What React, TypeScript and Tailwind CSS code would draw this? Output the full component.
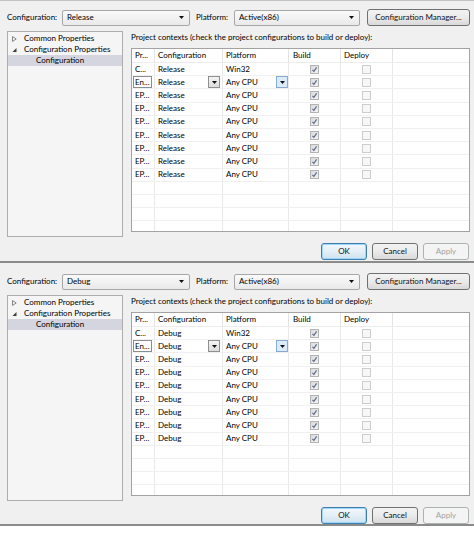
import React from 'react';

const rows = [
  { p: 'C...', plat: 'Win32' },
  { p: 'En...', plat: 'Any CPU', edit: true },
  { p: 'EP...', plat: 'Any CPU' },
  { p: 'EP...', plat: 'Any CPU' },
  { p: 'EP...', plat: 'Any CPU' },
  { p: 'EP...', plat: 'Any CPU' },
  { p: 'EP...', plat: 'Any CPU' },
  { p: 'EP...', plat: 'Any CPU' },
  { p: 'EP...', plat: 'Any CPU' },
];

function DownArrow() {
  return (
    <svg width="5" height="3" viewBox="0 0 5 3">
      <path d="M0 0h5L2.5 3z" fill="#111" />
    </svg>
  );
}

function Combo({ value, w }: { value: string; w: string }) {
  return (
    <div
      className={`${w} h-[16px] flex items-center pl-[4px] pr-[5px] border border-[#a7a7a7] rounded-[2px] bg-gradient-to-b from-[#fafafa] to-[#e9e9e9]`}
    >
      <span className="flex-1 truncate">{value}</span>
      <DownArrow />
    </div>
  );
}

function Btn({ children, className, variant }: { children: React.ReactNode; className: string; variant?: 'default' | 'disabled' }) {
  let look = 'border-[#707070] bg-gradient-to-b from-[#f3f3f3] via-[#ebebeb] to-[#d9d9d9] text-[#111]';
  if (variant === 'default') look = 'border-[#3c7fb1] bg-gradient-to-b from-[#f2f8fc] via-[#e4eff7] to-[#cde2f0] shadow-[inset_0_0_0_1px_#9fd6f5] text-[#111]';
  if (variant === 'disabled') look = 'border-[#adb2b5] bg-[#f4f4f4] text-[#a3a3a3]';
  return (
    <div className={`${className} ${look} h-[17px] border rounded-[3px] flex items-center justify-center`}>
      {children}
    </div>
  );
}

function Tree() {
  return (
    <div className="w-[116px] h-full border border-[#adadad] bg-[#f5f5f5] pt-[1px]">
      <div className="h-[11px] flex items-center pl-[4px]">
        <svg width="5" height="6" viewBox="0 0 5 6" className="mr-[7px]">
          <path d="M0.5 0.5 L4.2 3 L0.5 5.5 Z" fill="none" stroke="#7a7a7a" strokeWidth="0.9" />
        </svg>
        <span>Common Properties</span>
      </div>
      <div className="h-[11px] flex items-center pl-[4px]">
        <svg width="5" height="6" viewBox="0 0 5 6" className="mr-[7px]">
          <path d="M4.5 1 L4.5 5 L0.5 5 Z" fill="#3c3c3c" />
        </svg>
        <span>Configuration Properties</span>
      </div>
      <div className="h-[11px] flex items-center pl-[28px] bg-[#d5d5df]">
        <span>Configuration</span>
      </div>
    </div>
  );
}

function Check({ on }: { on: boolean }) {
  if (!on) return <div className="w-[9px] h-[9px] border border-[#cdcdcd] bg-[#f7f7f7]" />;
  return (
    <div className="w-[9px] h-[9px] border border-[#b3b3b3] bg-gradient-to-br from-[#dadada] to-[#f3f3f3] flex items-center justify-center">
      <svg width="7" height="7" viewBox="0 0 7 7">
        <path d="M1.4 3.8 L2.9 5.3 L5.6 1.4" stroke="#5a6c8e" strokeWidth="1.2" fill="none" />
      </svg>
    </div>
  );
}

function CellBtn({ hot }: { hot?: boolean }) {
  return (
    <div
      className={`w-[12px] h-[12px] border flex items-center justify-center ${
        hot ? 'border-[#86abd3] bg-[#d9eaf9]' : 'border-[#8f8f8f] bg-gradient-to-b from-[#f4f4f4] to-[#dcdcdc]'
      }`}
    >
      <DownArrow />
    </div>
  );
}

const col = ['w-[23px]', 'w-[68px]', 'w-[66px]', 'w-[52px]', 'w-[52px]'];

function Table({ config }: { config: string }) {
  return (
    <div className="h-[184px] border border-[#a3a3a3] bg-white overflow-hidden">
      <div className="flex h-[14px] border-b border-[#ececec]">
        <div className={`${col[0]} pl-[3px] border-r border-[#e3e3e3] flex items-center`}>Pr...</div>
        <div className={`${col[1]} pl-[3px] border-r border-[#e3e3e3] flex items-center`}>Configuration</div>
        <div className={`${col[2]} pl-[3px] border-r border-[#e3e3e3] flex items-center`}>Platform</div>
        <div className={`${col[3]} pl-[4px] border-r border-[#e3e3e3] flex items-center`}>Build</div>
        <div className={`${col[4]} pl-[3px] border-r border-[#e3e3e3] flex items-center`}>Deploy</div>
        <div className="flex-1" />
      </div>
      {rows.map((r, i) => (
        <div key={i} className="flex h-[13.2px] border-b border-[#f0f0f0]">
          <div className={`${col[0]} border-r border-[#e9e9e9] flex items-center pl-[1px]`}>
            {r.edit ? (
              <span className="border border-[#8c8c8c] px-[1px] leading-[10px]">{r.p}</span>
            ) : (
              <span className="pl-[2px]">{r.p}</span>
            )}
          </div>
          <div className={`${col[1]} border-r border-[#e9e9e9] flex items-center pl-[3px] pr-[2px]`}>
            <span className="flex-1">{config}</span>
            {r.edit && <CellBtn />}
          </div>
          <div className={`${col[2]} border-r border-[#e9e9e9] flex items-center pl-[3px]`}>
            <span className="flex-1">{r.plat}</span>
            {r.edit && <CellBtn hot />}
          </div>
          <div className={`${col[3]} border-r border-[#e9e9e9] flex items-center justify-center`}>
            <Check on />
          </div>
          <div className={`${col[4]} border-r border-[#e9e9e9] flex items-center justify-center`}>
            <Check on={false} />
          </div>
          <div className="flex-1" />
        </div>
      ))}
      {[0, 1, 2, 3].map((i) => (
        <div key={i} className="flex h-[13.2px] border-b border-[#f0f0f0]">
          {col.map((c, j) => (
            <div key={j} className={`${c} border-r border-[#e9e9e9]`} />
          ))}
        </div>
      ))}
    </div>
  );
}

function Dialog({ config, top, className }: { config: string; top: string; className: string }) {
  return (
    <div className={`${className} ${top} bg-[#f0f0f0] border-b-2 border-b-[#8b8b8b] pl-[7px] pr-[4px] flex flex-col`}>
      <div className="flex items-center h-[17px]">
        <span className="w-[55px]">Configuration:</span>
        <Combo w="w-[128px]" value={config} />
        <span className="ml-[6px] w-[38px]">Platform:</span>
        <Combo w="w-[126px]" value="Active(x86)" />
        <Btn className="ml-[7px] w-[103px]">Configuration Manager...</Btn>
      </div>
      <div className="flex mt-[5px] h-[206px]">
        <Tree />
        <div className="ml-[8px] flex-1 flex flex-col">
          <div className="h-[17px] pt-[1px]">Project contexts (check the project configurations to build or deploy):</div>
          <Table config={config} />
        </div>
      </div>
      <div className="flex justify-end gap-[5px] mt-[6px] pr-[1px]">
        <Btn className="w-[46px]" variant="default">OK</Btn>
        <Btn className="w-[46px]">Cancel</Btn>
        <Btn className="w-[46px]" variant="disabled">Apply</Btn>
      </div>
    </div>
  );
}

export default function App() {
  return (
    <div className="w-[474px] h-[538px] bg-white text-[8px] leading-[11px] text-[#000] font-['Lato','Noto_Sans',sans-serif] overflow-hidden">
      <Dialog config="Release" className="h-[263px] border-t border-t-[#c3c3c3]" top="pt-[8px]" />
      <Dialog config="Debug" className="h-[263px]" top="pt-[10px]" />
    </div>
  );
}
